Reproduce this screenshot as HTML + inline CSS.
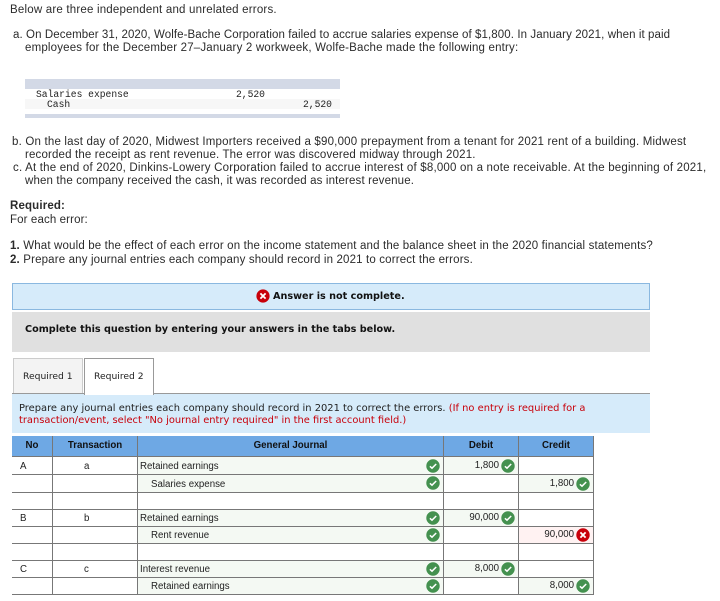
<!DOCTYPE html>
<html><head><meta charset="utf-8"><style>
html,body{margin:0;padding:0;background:#fff}
body{width:720px;height:601px;position:relative;overflow:hidden}
.a{position:absolute;white-space:nowrap}
.t{position:absolute;white-space:nowrap;font:11.5px/14px "Liberation Sans",sans-serif;color:#2b2b2b;letter-spacing:.15px}
.m{position:absolute;white-space:nowrap;font:9.67px/10px "Liberation Mono",monospace;color:#222}
.v{position:absolute;white-space:nowrap;font:9.67px/14px "DejaVu Sans",sans-serif;color:#111}
.c{position:absolute;white-space:nowrap;font:9.7px/12px "Liberation Sans",sans-serif;color:#222}
.h{font-weight:bold;color:#111;text-align:center}
.r{position:absolute;background:#777}
.g{position:absolute;background:#f4f9f3}
svg{position:absolute;width:14px;height:14px}
</style></head><body>
<div class="t" style="left:10px;top:3px;letter-spacing:.2px">Below are three independent and unrelated errors.</div>
<div class="t" style="left:13px;top:28px;letter-spacing:.09px">a. On December 31, 2020, Wolfe-Bache Corporation failed to accrue salaries expense of $1,800. In January 2021, when it paid</div>
<div class="t" style="left:25px;top:41px;letter-spacing:.177px">employees for the December 27–January 2 workweek, Wolfe-Bache made the following entry:</div>

<div class="a" style="left:25px;top:79px;width:315px;height:10px;background:#d3d9e6"></div>
<div class="a" style="left:25px;top:99px;width:315px;height:10px;background:#f7f7f7"></div>
<div class="a" style="left:25px;top:114px;width:315px;height:4px;background:#d3d9e6"></div>
<div class="m" style="left:36px;top:90px">Salaries expense</div>
<div class="m" style="left:47px;top:100px">Cash</div>
<div class="m" style="left:236px;top:90px">2,520</div>
<div class="m" style="left:303px;top:100px">2,520</div>

<div class="t" style="left:12px;top:135px;letter-spacing:.192px">b. On the last day of 2020, Midwest Importers received a $90,000 prepayment from a tenant for 2021 rent of a building. Midwest</div>
<div class="t" style="left:25px;top:148px;letter-spacing:.156px">recorded the receipt as rent revenue. The error was discovered midway through 2021.</div>
<div class="t" style="left:13px;top:161px;letter-spacing:.195px">c. At the end of 2020, Dinkins-Lowery Corporation failed to accrue interest of $8,000 on a note receivable. At the beginning of 2021,</div>
<div class="t" style="left:25px;top:174px;letter-spacing:.148px">when the company received the cash, it was recorded as interest revenue.</div>
<div class="t" style="left:10px;top:199px"><b>Required:</b></div>
<div class="t" style="left:10px;top:213px;letter-spacing:.12px">For each error:</div>
<div class="t" style="left:10px;top:239px;letter-spacing:.153px"><b>1.</b> What would be the effect of each error on the income statement and the balance sheet in the 2020 financial statements?</div>
<div class="t" style="left:10px;top:253px;letter-spacing:.154px"><b>2.</b> Prepare any journal entries each company should record in 2021 to correct the errors.</div>

<div class="a" style="left:12px;top:283px;width:636px;height:25px;background:#d6ebfa;border:1px solid #8ab8e0"></div>
<svg style="left:256px;top:289px" viewBox="0 0 14 14"><circle cx="7" cy="7" r="6.6" fill="#c8000a"/><path d="M4.4 4.4 9.6 9.6M9.6 4.4 4.4 9.6" stroke="#fff" stroke-width="1.8" fill="none"/></svg>
<div class="v" style="left:273px;top:290px;font-weight:bold">Answer is not complete.</div>
<div class="a" style="left:12px;top:312px;width:638px;height:40px;background:#e0e0e0"></div>
<div class="v" style="left:25px;top:323px;font-weight:bold">Complete this question by entering your answers in the tabs below.</div>

<div class="a" style="left:13px;top:358px;width:68px;height:35px;background:#f3f3f3;border:1px solid #ccc;border-bottom:0"></div>
<div class="a" style="left:84px;top:358px;width:68px;height:36px;background:#fff;border:1px solid #999;border-bottom:0;z-index:2"></div>
<div class="v" style="left:23px;top:370px;color:#222;font-size:9.2px;z-index:3">Required 1</div>
<div class="v" style="left:94px;top:370px;color:#222;font-size:9.2px;z-index:3">Required 2</div>
<div class="a" style="left:12px;top:393px;width:638px;height:1px;background:#999"></div>
<div class="a" style="left:12px;top:394px;width:638px;height:39px;background:#d6ebfa"></div>
<div class="v" style="left:19px;top:403px;font-size:9.9px;line-height:12px;color:#222;letter-spacing:.01px">Prepare any journal entries each company should record in 2021 to correct the errors. <span style="color:#c8000a">(If no entry is required for a</span></div>
<div class="v" style="left:19px;top:415px;font-size:9.9px;line-height:12px;color:#c8000a">transaction/event, select "No journal entry required" in the first account field.)</div>

<!-- table -->
<div class="a" style="left:12px;top:436px;width:581px;height:20px;background:#6ea8e4"></div>
<div class="g" style="left:138px;top:457px;width:305px;height:35px"></div>
<div class="g" style="left:138px;top:510px;width:305px;height:34px"></div>
<div class="g" style="left:138px;top:561px;width:305px;height:33px"></div>
<div class="g" style="left:444px;top:457px;width:74px;height:17px"></div>
<div class="g" style="left:519px;top:475px;width:74px;height:17px"></div>
<div class="g" style="left:444px;top:510px;width:74px;height:16px"></div>
<div class="g" style="left:519px;top:527px;width:74px;height:17px;background:#fff2f2"></div>
<div class="g" style="left:444px;top:561px;width:74px;height:16px"></div>
<div class="g" style="left:519px;top:578px;width:74px;height:16px"></div>

<div class="r" style="left:12px;top:456px;width:581px;height:1px"></div>
<div class="r" style="left:12px;top:474px;width:581px;height:1px"></div>
<div class="r" style="left:12px;top:492px;width:581px;height:1px"></div>
<div class="r" style="left:12px;top:509px;width:581px;height:1px"></div>
<div class="r" style="left:12px;top:526px;width:581px;height:1px"></div>
<div class="r" style="left:12px;top:543px;width:581px;height:1px"></div>
<div class="r" style="left:12px;top:560px;width:581px;height:1px"></div>
<div class="r" style="left:12px;top:577px;width:581px;height:1px"></div>
<div class="r" style="left:12px;top:594px;width:581px;height:1px"></div>
<div class="r" style="left:52px;top:436px;width:1px;height:159px"></div>
<div class="r" style="left:137px;top:436px;width:1px;height:159px"></div>
<div class="r" style="left:443px;top:436px;width:1px;height:159px"></div>
<div class="r" style="left:518px;top:436px;width:1px;height:159px"></div>
<div class="r" style="left:593px;top:436px;width:1px;height:159px"></div>

<div class="c h" style="left:12px;top:440px;width:40px">No</div>
<div class="c h" style="left:53px;top:440px;width:84px">Transaction</div>
<div class="c h" style="left:138px;top:440px;width:305px">General Journal</div>
<div class="c h" style="left:444px;top:440px;width:74px">Debit</div>
<div class="c h" style="left:519px;top:440px;width:74px">Credit</div>

<div class="c" style="left:20px;top:461px">A</div>
<div class="c" style="left:84px;top:461px">a</div>
<div class="c" style="left:140px;top:461px">Retained earnings</div>
<div class="c" style="left:151px;top:479px">Salaries expense</div>
<div class="c" style="left:20px;top:513px">B</div>
<div class="c" style="left:84px;top:513px">b</div>
<div class="c" style="left:140px;top:513px">Retained earnings</div>
<div class="c" style="left:151px;top:530px">Rent revenue</div>
<div class="c" style="left:20px;top:564px">C</div>
<div class="c" style="left:84px;top:564px">c</div>
<div class="c" style="left:140px;top:564px">Interest revenue</div>
<div class="c" style="left:151px;top:581px">Retained earnings</div>

<div class="c" style="right:221px;top:460px">1,800</div>
<div class="c" style="right:146px;top:478px">1,800</div>
<div class="c" style="right:221px;top:512px">90,000</div>
<div class="c" style="right:146px;top:529px">90,000</div>
<div class="c" style="right:221px;top:563px">8,000</div>
<div class="c" style="right:146px;top:580px">8,000</div>

<svg style="left:425.5px;top:459px" viewBox="0 0 14 14"><circle cx="7" cy="7" r="6.7" fill="#44914f"/><path d="M3.9 7.3 6 9.2 10.2 5" stroke="#fff" stroke-width="1.5" fill="none"/></svg>
<svg style="left:425.5px;top:476px" viewBox="0 0 14 14"><circle cx="7" cy="7" r="6.7" fill="#44914f"/><path d="M3.9 7.3 6 9.2 10.2 5" stroke="#fff" stroke-width="1.5" fill="none"/></svg>
<svg style="left:425.5px;top:511px" viewBox="0 0 14 14"><circle cx="7" cy="7" r="6.7" fill="#44914f"/><path d="M3.9 7.3 6 9.2 10.2 5" stroke="#fff" stroke-width="1.5" fill="none"/></svg>
<svg style="left:425.5px;top:528px" viewBox="0 0 14 14"><circle cx="7" cy="7" r="6.7" fill="#44914f"/><path d="M3.9 7.3 6 9.2 10.2 5" stroke="#fff" stroke-width="1.5" fill="none"/></svg>
<svg style="left:425.5px;top:562px" viewBox="0 0 14 14"><circle cx="7" cy="7" r="6.7" fill="#44914f"/><path d="M3.9 7.3 6 9.2 10.2 5" stroke="#fff" stroke-width="1.5" fill="none"/></svg>
<svg style="left:425.5px;top:579px" viewBox="0 0 14 14"><circle cx="7" cy="7" r="6.7" fill="#44914f"/><path d="M3.9 7.3 6 9.2 10.2 5" stroke="#fff" stroke-width="1.5" fill="none"/></svg>

<svg style="left:501px;top:459px" viewBox="0 0 14 14"><circle cx="7" cy="7" r="6.7" fill="#44914f"/><path d="M3.9 7.3 6 9.2 10.2 5" stroke="#fff" stroke-width="1.5" fill="none"/></svg>
<svg style="left:576px;top:477px" viewBox="0 0 14 14"><circle cx="7" cy="7" r="6.7" fill="#44914f"/><path d="M3.9 7.3 6 9.2 10.2 5" stroke="#fff" stroke-width="1.5" fill="none"/></svg>
<svg style="left:501px;top:511px" viewBox="0 0 14 14"><circle cx="7" cy="7" r="6.7" fill="#44914f"/><path d="M3.9 7.3 6 9.2 10.2 5" stroke="#fff" stroke-width="1.5" fill="none"/></svg>
<svg style="left:576px;top:528px" viewBox="0 0 14 14"><circle cx="7" cy="7" r="6.7" fill="#c8000a"/><path d="M4.4 4.4 9.6 9.6M9.6 4.4 4.4 9.6" stroke="#fff" stroke-width="1.8" fill="none"/></svg>
<svg style="left:501px;top:562px" viewBox="0 0 14 14"><circle cx="7" cy="7" r="6.7" fill="#44914f"/><path d="M3.9 7.3 6 9.2 10.2 5" stroke="#fff" stroke-width="1.5" fill="none"/></svg>
<svg style="left:576px;top:579px" viewBox="0 0 14 14"><circle cx="7" cy="7" r="6.7" fill="#44914f"/><path d="M3.9 7.3 6 9.2 10.2 5" stroke="#fff" stroke-width="1.5" fill="none"/></svg>
</body></html>
